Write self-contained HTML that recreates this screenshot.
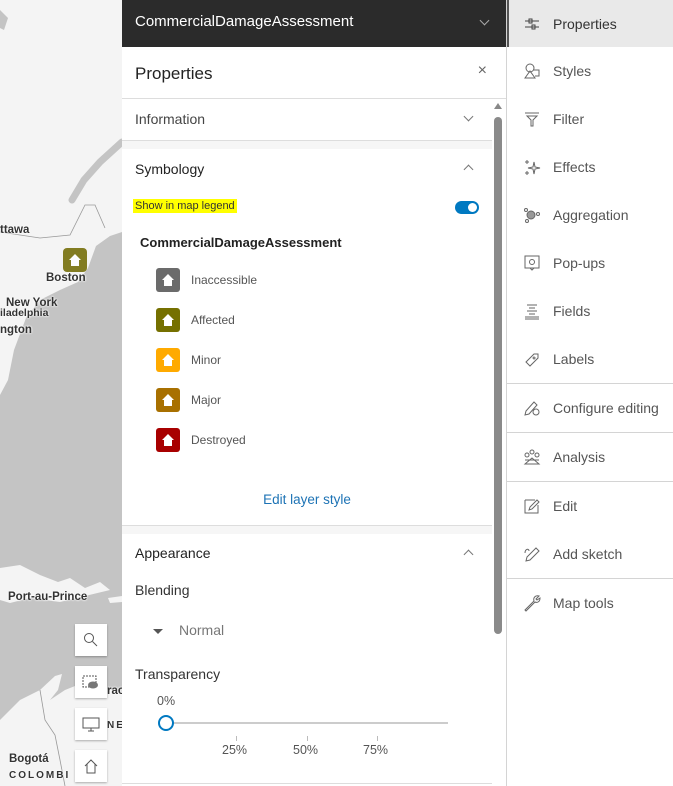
<!DOCTYPE html>
<html><head><meta charset="utf-8"><style>
*{box-sizing:border-box;margin:0;padding:0}
body{width:673px;height:786px;overflow:hidden;font-family:"Liberation Sans",sans-serif;background:#fff;position:relative}
.map{position:absolute;left:0;top:0;width:122px;height:786px;background:#f4f4f4;overflow:hidden}
.lbl{position:absolute;font-weight:bold;font-size:11.5px;color:#333;text-shadow:0 0 2px #fff,0 0 2px #fff}
.mbtn{position:absolute;left:75px;width:32px;height:32px;background:#fff;box-shadow:0 1px 2px rgba(0,0,0,.3);display:flex;align-items:center;justify-content:center}
.panel{position:absolute;left:122px;top:0;width:384px;height:786px;background:#fff}
.hdr{height:47px;background:#2b2b2b;color:#fff;font-size:15px;padding:13px 0 0 13px;position:relative}
.nav{position:absolute;left:506px;top:0;width:167px;height:786px;border-left:1px solid #d4d4d4;background:#fff}
.ni{height:48px;display:flex;align-items:center;font-size:14px;color:#555;padding-left:16px}
.ni svg{width:18px;height:18px;margin-right:12px;fill:none;stroke:#666;stroke-width:1}
.sep{border-top:1px solid #d4d4d4}
.leg{position:absolute;left:34px;display:flex;align-items:center;font-size:12px;color:#555}
.sw{width:24px;height:24px;border-radius:3px;margin-right:11px;display:flex;align-items:center;justify-content:center}
.chev{position:absolute;right:30px;width:7px;height:7px;border-right:1px solid #777;border-bottom:1px solid #777}
</style></head><body>
<div class="map">
<svg width="122" height="786" viewBox="0 0 122 786" style="position:absolute;left:0;top:0">
<rect x="0" y="0" width="122" height="786" fill="#f4f4f4"/>
<polygon points="122,232 110,236 96,246 88,268 78,282 60,290 40,300 26,318 14,350 8,380 0,395 0,720 20,700 40,690 55,676 62,674 58,690 50,700 65,690 80,684 100,688 122,692" fill="#c4c4c4"/>
<path d="M122,142 L100,162 L84,180 L72,200" stroke="#c4c4c4" stroke-width="7" fill="none" stroke-linecap="round"/>
<polygon points="0,10 8,18 4,30 0,28" fill="#c4c4c4"/>
<path d="M0,232L40,238L70,235L85,205L95,205L105,228" stroke="#999" fill="none" stroke-width="0.8"/>
<polygon points="0,568 20,565 40,575 58,582 70,578 85,588 100,582 110,590 60,602 30,598 10,603 0,600" fill="#f4f4f4"/>
<polygon points="108,598 122,596 122,602 110,603" fill="#f4f4f4"/>
<path d="M40,690L45,720L55,735L60,760L65,786" stroke="#999" fill="none" stroke-width="0.8"/>
</svg>
<div style="position:absolute;left:63px;top:248px;width:24px;height:24px;background:#76700b;border-radius:4px;opacity:.9;display:flex;align-items:center;justify-content:center"><svg width="14" height="14" viewBox="0 0 14 14"><path d="M7,1L13,7H11V13H3V7H1Z" fill="#fff"/></svg></div>
<div class="lbl" style="left:0;top:224px">ttawa</div>
<div class="lbl" style="left:46px;top:272px">Boston</div>
<div class="lbl" style="left:6px;top:297px">New York</div>
<div class="lbl" style="left:0;top:307px;font-size:10.5px">iladelphia</div>
<div class="lbl" style="left:0;top:324px">ngton</div>
<div class="lbl" style="left:8px;top:591px">Port-au-Prince</div>
<div class="lbl" style="left:107px;top:685px">rac</div>
<div class="lbl" style="left:107px;top:720px;font-size:10px;letter-spacing:2px">NE</div>
<div class="lbl" style="left:9px;top:753px">Bogotá</div>
<div class="lbl" style="left:9px;top:770px;font-size:10px;letter-spacing:2px">COLOMBI</div>
<div class="mbtn" style="top:624px"><svg width="16" height="16"><circle cx="6" cy="6" r="4.5" stroke="#555" fill="none"/><path d="M9.5,9.5L14,14" stroke="#555"/></svg></div>
<div class="mbtn" style="top:666px"><svg width="18" height="16"><rect x="1" y="2" width="13" height="11" stroke="#555" fill="none" stroke-dasharray="2 1"/><ellipse cx="11" cy="11" rx="5" ry="3.5" fill="#777"/></svg></div>
<div class="mbtn" style="top:708px"><svg width="18" height="16"><rect x="1" y="2" width="16" height="10" stroke="#555" fill="none"/><path d="M9,12V15M6,15H12" stroke="#555"/></svg></div>
<div class="mbtn" style="top:750px"><svg width="16" height="16"><path d="M2,8L8,2L14,8M4,6V15H12V6" stroke="#555" fill="none"/></svg></div>
</div>

<div class="panel">
<div class="hdr">CommercialDamageAssessment<div class="chev" style="right:18px;top:17px;border-color:#aaa;transform:rotate(45deg)"></div></div>
<div style="height:52px;border-bottom:1px solid #ddd;position:relative;font-size:17px;color:#222;padding:17px 0 0 13px">Properties<span style="position:absolute;right:19px;top:15px;font-size:16px;color:#666">×</span></div>
<div style="height:41px;position:relative;font-size:14px;color:#444;padding:12px 0 0 13px;width:370px">Information<div class="chev" style="right:20px;top:14px;transform:rotate(45deg)"></div></div>
<div style="height:9px;background:#f6f6f6;border-top:1px solid #ddd;width:370px"></div>
<div style="position:absolute;top:149px;left:0;width:370px;height:376px">
<div style="position:absolute;left:13px;top:12px;font-size:14px;color:#222">Symbology</div>
<div class="chev" style="right:20px;top:17px;transform:rotate(-135deg)"></div>
<div style="position:absolute;left:11px;top:50px;background:#ffff00;font-size:11px;color:#333;padding:1px 2px">Show in map legend</div>
<div style="position:absolute;left:333px;top:52px;width:24px;height:13px;background:#0079c1;border-radius:7px"><div style="position:absolute;right:2px;top:2px;width:9px;height:9px;border-radius:50%;background:#fff"></div></div>
<div style="position:absolute;left:18px;top:86px;font-size:13px;font-weight:bold;color:#222">CommercialDamageAssessment</div>
<div class="leg" style="top:119px"><div class="sw" style="background:#6b6b6b"><svg width="14" height="14"><path d="M7,1L13,7H11V13H3V7H1Z" fill="#fff"/></svg></div>Inaccessible</div>
<div class="leg" style="top:159px"><div class="sw" style="background:#757000"><svg width="14" height="14"><path d="M7,1L13,7H11V13H3V7H1Z" fill="#fff"/></svg></div>Affected</div>
<div class="leg" style="top:199px"><div class="sw" style="background:#ffaa00"><svg width="14" height="14"><path d="M7,1L13,7H11V13H3V7H1Z" fill="#fff"/></svg></div>Minor</div>
<div class="leg" style="top:239px"><div class="sw" style="background:#a87000"><svg width="14" height="14"><path d="M7,1L13,7H11V13H3V7H1Z" fill="#fff"/></svg></div>Major</div>
<div class="leg" style="top:279px"><div class="sw" style="background:#a80000"><svg width="14" height="14"><path d="M7,1L13,7H11V13H3V7H1Z" fill="#fff"/></svg></div>Destroyed</div>
<div style="position:absolute;left:0;width:370px;text-align:center;top:343px;font-size:13.5px;color:#1d73b5">Edit layer style</div>
</div>
<div style="position:absolute;top:525px;left:0;width:370px;height:9px;background:#f6f6f6;border-top:1px solid #ddd"></div>
<div style="position:absolute;top:534px;left:0;width:370px;height:252px">
<div style="position:absolute;left:13px;top:11px;font-size:14px;color:#222">Appearance</div>
<div class="chev" style="right:20px;top:17px;transform:rotate(-135deg)"></div>
<div style="position:absolute;left:13px;top:48px;font-size:14px;color:#333">Blending</div>
<div style="position:absolute;left:31px;top:95px;width:0;height:0;border-left:5px solid transparent;border-right:5px solid transparent;border-top:5px solid #555"></div>
<div style="position:absolute;left:57px;top:88px;font-size:14px;color:#777">Normal</div>
<div style="position:absolute;left:13px;top:132px;font-size:14px;color:#333">Transparency</div>
<div style="position:absolute;left:35px;top:160px;font-size:12.5px;color:#555">0%</div>
<div style="position:absolute;left:44px;top:188px;width:282px;height:2px;background:#ccc"></div>
<div style="position:absolute;left:36px;top:181px;width:16px;height:16px;border:2px solid #0079c1;border-radius:50%;background:#fff"></div>
<div style="position:absolute;left:114px;top:202px;width:1px;height:5px;background:#bbb"></div>
<div style="position:absolute;left:185px;top:202px;width:1px;height:5px;background:#bbb"></div>
<div style="position:absolute;left:255px;top:202px;width:1px;height:5px;background:#bbb"></div>
<div style="position:absolute;left:100px;top:209px;font-size:12.5px;color:#555">25%</div>
<div style="position:absolute;left:171px;top:209px;font-size:12.5px;color:#555">50%</div>
<div style="position:absolute;left:241px;top:209px;font-size:12.5px;color:#555">75%</div>
</div>
<div style="position:absolute;top:783px;left:0;width:370px;border-top:1px solid #ddd"></div>
<div style="position:absolute;left:370px;top:99px;width:14px;height:687px;background:#fff"></div>
<div style="position:absolute;left:372px;top:103px;width:0;height:0;border-left:4px solid transparent;border-right:4px solid transparent;border-bottom:6px solid #888"></div>
<div style="position:absolute;left:372px;top:117px;width:8px;height:517px;background:#8a8a8a;border-radius:4px"></div>
</div>

<div class="nav">
<div class="ni" style="background:#e9e9e9;height:47px;border-left:2px solid #555;padding-left:14px"><svg viewBox="0 0 18 18"><path d="M2,6H16M2,12H16M6,4V8H9V4ZM9,10V14H12V10Z" stroke="#444"/></svg><span style="color:#333">Properties</span></div>
<div class="ni"><svg viewBox="0 0 18 18"><circle cx="7" cy="6" r="4"/><path d="M2,16L7,9L12,16ZM10,8H16V14H12"/></svg>Styles</div>
<div class="ni"><svg viewBox="0 0 18 18"><path d="M2,3H16M4,6H14L10,10V16H8V10Z"/></svg>Filter</div>
<div class="ni"><svg viewBox="0 0 18 18"><path d="M11,4L12,9L17,10L12,11L11,16L10,11L5,10L10,9ZM4,2V6M2,4H6M4,13V17M2,15H6"/></svg>Effects</div>
<div class="ni"><svg viewBox="0 0 18 18"><circle cx="8" cy="9" r="4" fill="#999"/><circle cx="3" cy="4" r="1.5"/><circle cx="15" cy="8" r="1.5"/><circle cx="4" cy="15" r="1.5"/></svg>Aggregation</div>
<div class="ni"><svg viewBox="0 0 18 18"><rect x="2" y="2" width="14" height="12"/><circle cx="9" cy="8" r="2.5"/><path d="M7,14L9,16L11,14"/></svg>Pop-ups</div>
<div class="ni"><svg viewBox="0 0 18 18"><path d="M4,3H14M6,6H12M4,9H14M6,12H12M2,15H16M2,17H16"/></svg>Fields</div>
<div class="ni"><svg viewBox="0 0 18 18"><path d="M3,12L11,4L15,4L15,8L7,16ZM4,13L6,15M11,7a1,1 0 1,0 0.1,0"/></svg>Labels</div>
<div class="sep"></div>
<div class="ni"><svg viewBox="0 0 18 18"><path d="M2,16L3,12L11,3L14,6L6,15Z"/><circle cx="13" cy="13" r="3"/></svg>Configure editing</div>
<div class="sep"></div>
<div class="ni"><svg viewBox="0 0 18 18"><circle cx="4" cy="7" r="2"/><circle cx="9" cy="4" r="2"/><circle cx="14" cy="7" r="2"/><path d="M2,16L9,10L16,16ZM2,12H16"/></svg>Analysis</div>
<div class="sep"></div>
<div class="ni"><svg viewBox="0 0 18 18"><path d="M2,3H12M2,3V16H15V8M6,13L7,10L14,3L16,5L9,12Z"/></svg>Edit</div>
<div class="ni"><svg viewBox="0 0 18 18"><path d="M3,16L4,12L13,3L16,6L7,15ZM2,8C2,4 6,3 6,6"/></svg>Add sketch</div>
<div class="sep"></div>
<div class="ni"><svg viewBox="0 0 18 18"><path d="M2,16L11,7C10,4 12,1 16,2L13,5L14,6L17,4C17,8 14,9 12,8L3,17Z"/></svg>Map tools</div>
</div>
</body></html>
